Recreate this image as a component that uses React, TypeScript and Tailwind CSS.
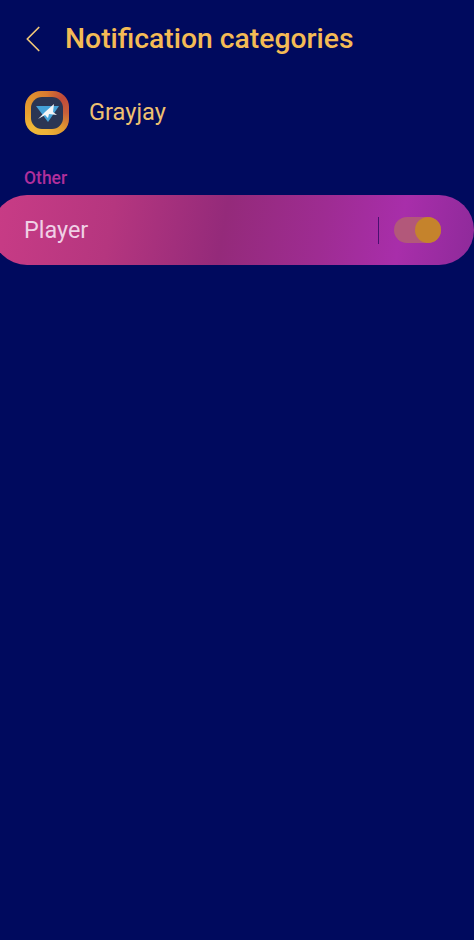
import { ChevronLeft } from 'lucide-react'

function AppIcon() {
  return (
    <div className="w-[44px] h-[44px] rounded-[16px] bg-[conic-gradient(from_0deg,#d87a30,#c04a3a,#c8603a,#e09a30,#eeb238,#f0b838,#e8a030,#e09030,#d87a30)] flex items-center justify-center">
      <div className="w-[32px] h-[32px] rounded-[11px] bg-[#2b3654] flex items-center justify-center">
        <svg width="23" height="18" viewBox="0 0 23 18">
          <path d="M0 2 L23 2 L12 18 Z" fill="#45a2d8" />
          <path d="M2 15 L9 8 L18 0 L17 8 L21 11 L13 10 L12 14 L9 11 Z" fill="#f4f6f8" />
        </svg>
      </div>
    </div>
  )
}

export default function App() {
  return (
    <div className="w-[474px] h-[940px] bg-[#000a5e] overflow-hidden font-['Roboto',sans-serif]">
      <div className="h-[78px] flex items-center pl-[10px]">
        <ChevronLeft size={46} strokeWidth={0.9} className="text-[#f0c878]" />
        <h1 className="ml-[9px] text-[28.3px] font-medium text-[#f4bb55]">Notification categories</h1>
      </div>
      <div className="h-[70px] flex items-center pl-[25px]">
        <AppIcon />
        <span className="ml-[20px] text-[23.6px] text-[#eec070]">Grayjay</span>
      </div>
      <div className="h-[47px] pl-[24px] pt-[19px] text-[17.5px] leading-[22px] font-medium text-[#b02f9c]">Other</div>
      <div className="ml-[-8px] w-[482px] h-[70px] rounded-[35px] bg-[linear-gradient(100deg,#c93c86_0%,#b5367f_25%,#942a7a_48%,#9e2c92_68%,#a82eaa_84%,#8e2a9a_100%)] flex items-center pl-[32px] pr-[33px]">
        <span className="text-[23.4px] text-[#f0d0e6] flex-1 pt-[2px]">Player</span>
        <div className="w-px h-[27px] bg-[#4a0f70]" />
        <div className="relative ml-[15px] w-[47px] h-[26px] rounded-full bg-[#b2587a]">
          <div className="absolute right-0 top-0 w-[26px] h-[26px] rounded-full bg-[#c5832c]" />
        </div>
      </div>
    </div>
  )
}
